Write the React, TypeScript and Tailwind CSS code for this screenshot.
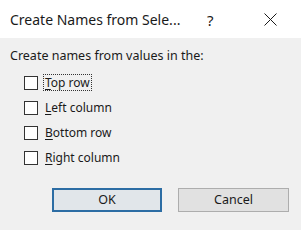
import React from "react";

const font = { fontFamily: '"Segoe UI", "Noto Sans", "Open Sans", sans-serif' };

function Row({ u, rest, focused }: { u: string; rest: string; focused?: boolean }) {
  return (
    <div className="flex items-center h-[25px]">
      <div className="w-[14px] h-[14px] border border-[#333333] bg-white shrink-0" />
      <span
        className={
          "ml-[6px] px-[1px] leading-[15px] text-[12px] text-[#1a1a1a] " +
          (focused ? "outline outline-1 outline-dotted outline-[#333]" : "")
        }
      >
        <span className="underline underline-offset-2">{u}</span>
        {rest}
      </span>
    </div>
  );
}

export default function App() {
  return (
    <div className="w-[301px] h-[230px] bg-[#f0f0f0] flex flex-col overflow-hidden" style={font}>
      <div className="h-[38px] bg-white flex items-center shrink-0 relative">
        <span className="ml-[10px] text-[14px] text-[#1a1a1a]">Create Names from Sele...</span>
        <span className="absolute left-[207px] top-[9px] text-[15px] text-[#1a1a1a]">?</span>
        <svg className="absolute left-[264px] top-[13px]" width="13" height="13" viewBox="0 0 13 13">
          <path d="M0.5 0.5 L12.5 12.5 M12.5 0.5 L0.5 12.5" stroke="#1a1a1a" strokeWidth="1" />
        </svg>
      </div>
      <div className="pl-[10px] pt-[10px] text-[12.5px] text-[#1a1a1a] leading-[16px]">Create names from values in the:</div>
      <div className="pl-[24px] pt-[6px] flex flex-col">
        <Row u="T" rest="op row" focused />
        <Row u="L" rest="eft column" />
        <Row u="B" rest="ottom row" />
        <Row u="R" rest="ight column" />
      </div>
      <div className="flex pl-[52px] gap-[16px] mt-[18px]">
        <button className="w-[110px] h-[24px] border-2 border-[#2c6da4] bg-[#e1e6ea] text-[12.5px] text-[#1a1a1a]">OK</button>
        <button className="w-[111px] h-[24px] border border-[#adadad] bg-[#e1e1e1] text-[12.5px] text-[#1a1a1a]">Cancel</button>
      </div>
    </div>
  );
}
